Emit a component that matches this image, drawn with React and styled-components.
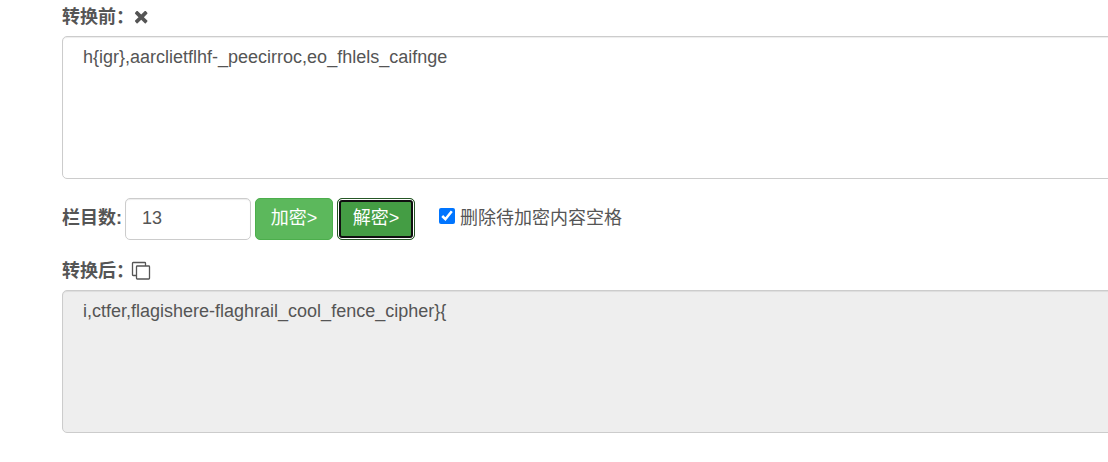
import React, { useState } from "react";
import styled, { createGlobalStyle } from "styled-components";

const GlobalStyle = createGlobalStyle`
  *, *::before, *::after { box-sizing: border-box; }
  body {
    margin: 0;
    overflow-x: hidden;
    background: #fff;
    color: #555;
    font-family: "Liberation Sans", "Noto Sans CJK SC", sans-serif;
    font-size: 18px;
    line-height: 24px;
  }
`;

const Form = styled.form`
  display: flex;
  flex-direction: column;
  padding: 4px 0 28px 62px;
  margin-right: -16px;
`;

const FieldHeader = styled.div`
  display: flex;
  align-items: center;
  height: 26px;
  margin-bottom: 6px;
`;

const Label = styled.label`
  font-weight: 700;
  white-space: nowrap;
`;

const IconButton = styled.button`
  display: flex;
  margin-left: -3px;
  padding: 0;
  border: 0;
  background: none;
  color: #555;
  cursor: pointer;
`;

const TextArea = styled.textarea`
  display: block;
  width: 100%;
  height: 143px;
  padding: 8px 20px;
  border: 1px solid #ccc;
  border-radius: 5px;
  background: ${(p) => (p.readOnly ? "#eee" : "#fff")};
  box-shadow: inset 0 1px 1px rgba(0, 0, 0, 0.075);
  color: #555;
  font: inherit;
  resize: none;
  outline: 0;
`;

const Controls = styled.div`
  display: flex;
  align-items: center;
  gap: 4px;
  margin: 19px 0 18px;
`;

const ColumnsLabel = styled(Label)`
  width: 59px;
  padding-bottom: 2px;
`;

const NumberInput = styled.input`
  width: 126px;
  height: 42px;
  padding: 6px 16px 8px;
  border: 1px solid #ccc;
  border-radius: 5px;
  box-shadow: inset 0 1px 1px rgba(0, 0, 0, 0.075);
  color: #555;
  font: inherit;
  outline: 0;
`;

const Button = styled.button`
  width: 78px;
  height: 42px;
  padding: 0 0 2px;
  border: 1px solid ${(p) => (p.$active ? "#255625" : "#4cae4c")};
  border-radius: 5px;
  background: ${(p) => (p.$active ? "#449d44" : "#5cb85c")};
  box-shadow: ${(p) => (p.$active ? "inset 0 0 0 1px #fff, inset 0 0 0 3px #101010" : "none")};
  color: #fff;
  font: inherit;
  white-space: nowrap;
  cursor: pointer;
`;

const CheckLabel = styled.label`
  display: flex;
  align-items: center;
  gap: 5px;
  margin-left: 20px;
  padding-bottom: 2px;
  white-space: nowrap;
`;

const Checkbox = styled.input`
  width: 16px;
  height: 16px;
  margin: 0 0 4px;
  accent-color: #0075ff;
`;

const ClearIcon = () => (
  <svg width="20" height="20" viewBox="0 0 20 20" aria-hidden="true">
    <path
      fill="currentColor"
      d="M6.6 4.100 10.200 7.600l3.600-3.500q.5-.4 1 0l1.500 1.600q.4.500 0 1L12.900 10.200l3.400 3.400q.4.500 0 1l-1.500 1.600q-.5.400-1 0l-3.600-3.500-3.600 3.500q-.5.400-1 0l-1.500-1.600q-.4-.5 0-1l3.400-3.400L4.100 6.700q-.4-.5 0-1l1.500-1.600q.5-.4 1 0Z"
    />
  </svg>
);

const CopyIcon = () => (
  <svg width="20" height="20" viewBox="0 0 20 20" fill="none" stroke="currentColor" strokeWidth="1.3" aria-hidden="true">
    <path d="M5 14.500H2.200Q1.500 14.500 1.500 13.800V2.200Q1.500 1.500 2.200 1.500H13.800Q14.500 1.500 14.500 2.200V5" />
    <rect x="5.500" y="5" width="13" height="13" rx="0.700" />
  </svg>
);

export default function App() {
  const [source, setSource] = useState("h{igr},aarclietflhf-_peecirroc,eo_fhlels_caifnge");
  const [columns, setColumns] = useState("13");
  const [strip, setStrip] = useState(true);

  return (
    <>
      <GlobalStyle />
      <Form onSubmit={(e) => e.preventDefault()}>
        <FieldHeader>
          <Label htmlFor="source">转换前：</Label>
          <IconButton type="button" aria-label="清空" onClick={() => setSource("")}>
            <ClearIcon />
          </IconButton>
        </FieldHeader>
        <TextArea id="source" spellCheck={false} value={source} onChange={(e) => setSource(e.target.value)} />
        <Controls>
          <ColumnsLabel htmlFor="columns">栏目数:</ColumnsLabel>
          <NumberInput id="columns" value={columns} onChange={(e) => setColumns(e.target.value)} />
          <Button type="button">加密&gt;</Button>
          <Button type="button" $active>解密&gt;</Button>
          <CheckLabel>
            <Checkbox type="checkbox" checked={strip} onChange={(e) => setStrip(e.target.checked)} />
            删除待加密内容空格
          </CheckLabel>
        </Controls>
        <FieldHeader>
          <Label htmlFor="result">转换后：</Label>
          <IconButton type="button" aria-label="复制">
            <CopyIcon />
          </IconButton>
        </FieldHeader>
        <TextArea id="result" readOnly spellCheck={false} value="i,ctfer,flagishere-flaghrail_cool_fence_cipher}{" />
      </Form>
    </>
  );
}
